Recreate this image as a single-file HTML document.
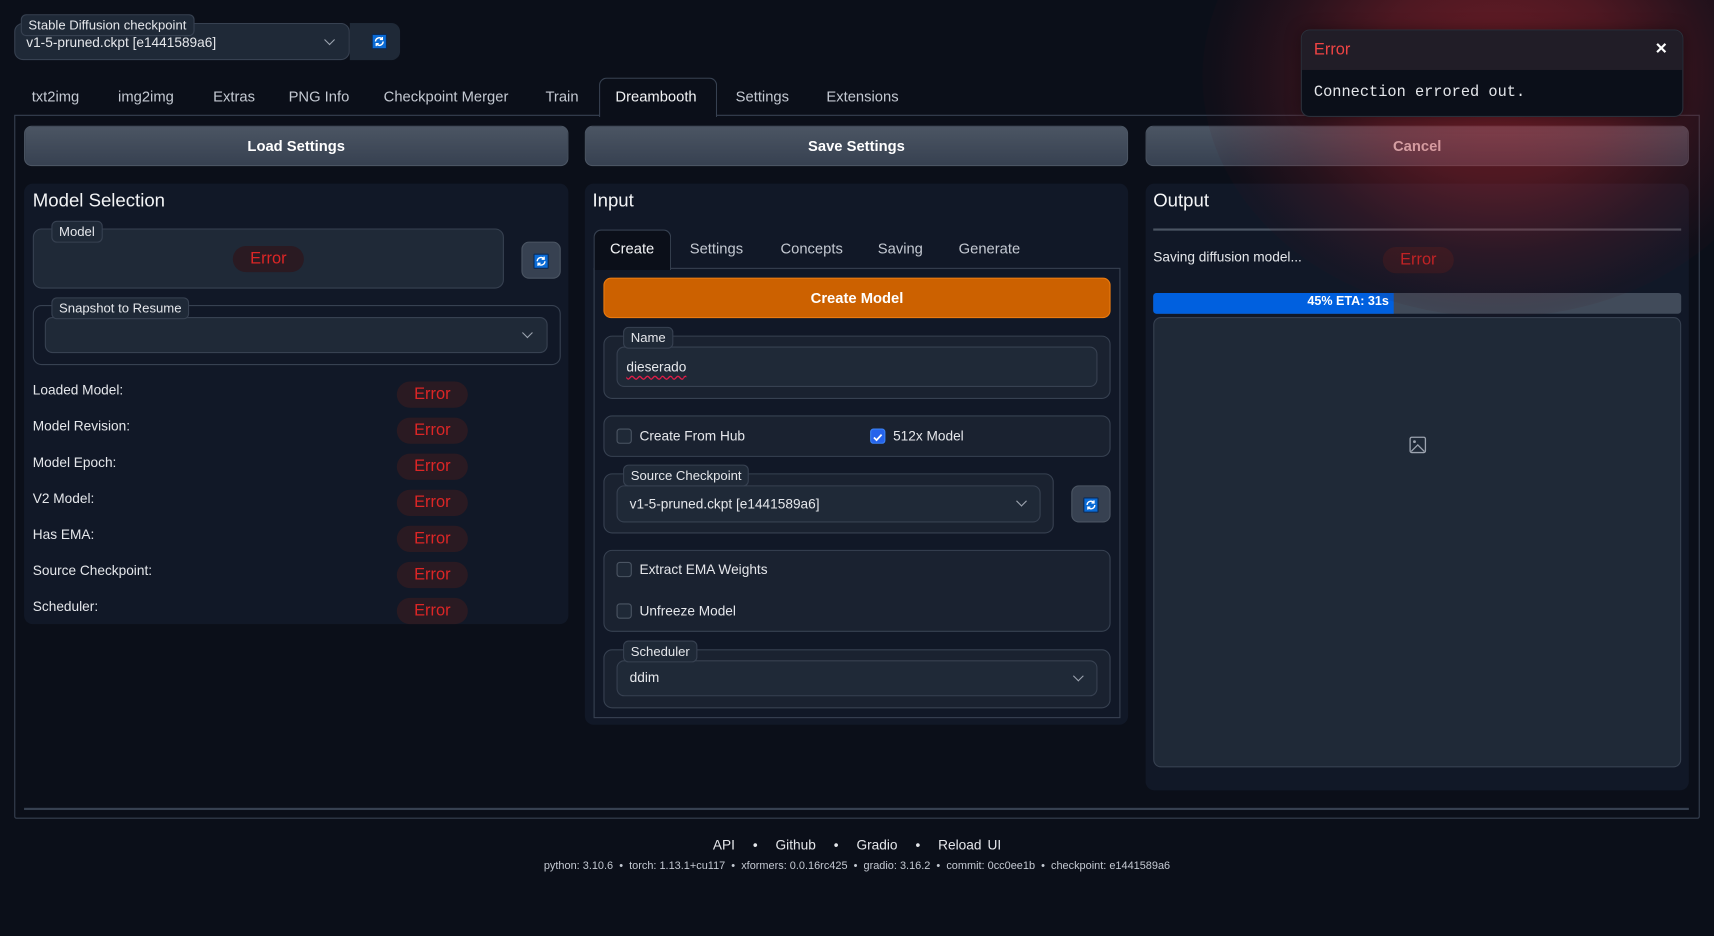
<!DOCTYPE html>
<html><head><meta charset="utf-8">
<style>
*{box-sizing:border-box;margin:0;padding:0}
html,body{width:1714px;height:936px;overflow:hidden;background:#0b0f19}
#w{position:absolute;left:0;top:0;width:1568px;height:856px;transform:scale(1.09311);transform-origin:0 0;font-family:"Liberation Sans",sans-serif;color:#e5e7eb;background:#0b0f19;overflow:hidden}
.a{position:absolute}
.glow{left:1100px;top:-150px;width:540px;height:440px;border-radius:50%;background:radial-gradient(ellipse at 50% 50%,rgba(190,40,50,.55) 0%,rgba(160,35,45,.45) 30%,rgba(110,25,35,.28) 52%,rgba(60,15,25,.12) 68%,rgba(11,15,25,0) 78%);pointer-events:none}
.blk{background:#111827;border-radius:8px}
.box{border:1px solid #374151;border-radius:8px;background:#1f2937}
.inp{border:1px solid #374151;border-radius:7px;background:#1f2937}
.chip{background:#1f2937;border:1px solid #374151;border-radius:5px;font-size:12px;padding:2px 6px;color:#e5e7eb}
.btn{background:linear-gradient(#4b5563,#374151);border:1px solid #4b5563;border-radius:7px;color:#fff;font-weight:bold;font-size:13.5px;text-align:center;line-height:36px}
.tab{font-size:13.5px;color:#c4c9d2}
.t{font-size:12.5px;color:#e5e7eb}
.err{background:#2a1a22;border-radius:13px;color:#dc2626;font-size:15px;text-align:center;width:65px;height:24px;line-height:24px}
.ref{width:14px;height:14px;background:#0a6bd6;border:1px solid #0c2a55;border-radius:1px}
.ref svg{display:block}
.rb{background:#374151;border:1px solid #4b5563;border-radius:7px}
.cb{width:14px;height:14px;border:1px solid #4b5563;border-radius:3px;background:#1f2937}
.chev{width:7px;height:7px;border-right:1.3px solid #9ca3af;border-bottom:1.3px solid #9ca3af;transform:rotate(45deg)}
h3{font-weight:normal;font-size:17px;color:#f3f4f6;position:absolute}
</style></head><body><div id="w">

<!-- checkpoint -->
<div class="a box" style="left:13px;top:21px;width:307px;height:34px;background:#1f2937"></div>
<div class="a chip" style="left:19px;top:13px">Stable Diffusion checkpoint</div>
<div class="a t" style="left:24px;top:32px">v1-5-pruned.ckpt [e1441589a6]</div>
<div class="a chev" style="left:298px;top:33px"></div>
<div class="a" style="left:320px;top:21px;width:46px;height:34px;background:#1f2937;border-radius:0 8px 8px 0"></div>
<div class="a ref" style="left:340px;top:31px"><svg width="12" height="12" viewBox="0 0 12 12"><path d="M2.5 6a3.5 3.5 0 0 1 6-2.4M9.5 6a3.5 3.5 0 0 1-6 2.4" stroke="#fff" stroke-width="1.3" fill="none"/><path d="M8.8 1.8v2.3H6.5M3.2 10.2V7.9h2.3" stroke="#fff" stroke-width="1.2" fill="none"/></svg></div>

<!-- tabs -->
<div class="a tab" style="left:29px;top:81px">txt2img</div>
<div class="a tab" style="left:108px;top:81px">img2img</div>
<div class="a tab" style="left:195px;top:81px">Extras</div>
<div class="a tab" style="left:264px;top:81px">PNG Info</div>
<div class="a tab" style="left:351px;top:81px">Checkpoint Merger</div>
<div class="a tab" style="left:499px;top:81px">Train</div>
<div class="a" style="left:13px;top:105px;width:1542px;height:644px;border:1.5px solid #374151;border-radius:0 0 2px 2px"></div>
<div class="a" style="left:548px;top:71px;width:108px;height:36px;border:1.5px solid #374151;border-bottom:none;border-radius:7px 7px 0 0;background:#0b0f19"></div>
<div class="a tab" style="left:563px;top:81px;color:#f3f4f6">Dreambooth</div>
<div class="a tab" style="left:673px;top:81px">Settings</div>
<div class="a tab" style="left:756px;top:81px">Extensions</div>

<!-- buttons -->
<div class="a btn" style="left:22px;top:115px;width:498px;height:37px">Load Settings</div>
<div class="a btn" style="left:535px;top:115px;width:497px;height:37px">Save Settings</div>
<div class="a btn" style="left:1048px;top:115px;width:497px;height:37px">Cancel</div>

<!-- Model selection -->
<div class="a blk" style="left:22px;top:168px;width:498px;height:403px"></div>
<h3 style="left:30px;top:174px">Model Selection</h3>
<div class="a box" style="left:30px;top:209px;width:431px;height:55px"></div>
<div class="a chip" style="left:47px;top:202px">Model</div>
<div class="a err" style="left:213px;top:225px">Error</div>
<div class="a rb" style="left:477px;top:221px;width:36px;height:34px"></div>
<div class="a ref" style="left:488px;top:232px"><svg width="12" height="12" viewBox="0 0 12 12"><path d="M2.5 6a3.5 3.5 0 0 1 6-2.4M9.5 6a3.5 3.5 0 0 1-6 2.4" stroke="#fff" stroke-width="1.3" fill="none"/><path d="M8.8 1.8v2.3H6.5M3.2 10.2V7.9h2.3" stroke="#fff" stroke-width="1.2" fill="none"/></svg></div>
<div class="a box" style="left:30px;top:279px;width:483px;height:55px;background:#111827"></div>
<div class="a inp" style="left:41px;top:290px;width:460px;height:33px"></div>
<div class="a chip" style="left:47px;top:272px">Snapshot to Resume</div>
<div class="a chev" style="left:479px;top:301px"></div>

<div class="a t" style="left:30px;top:350px">Loaded Model:</div><div class="a err" style="left:363px;top:349px">Error</div>
<div class="a t" style="left:30px;top:383px">Model Revision:</div><div class="a err" style="left:363px;top:382px">Error</div>
<div class="a t" style="left:30px;top:416px">Model Epoch:</div><div class="a err" style="left:363px;top:415px">Error</div>
<div class="a t" style="left:30px;top:449px">V2 Model:</div><div class="a err" style="left:363px;top:448px">Error</div>
<div class="a t" style="left:30px;top:482px">Has EMA:</div><div class="a err" style="left:363px;top:481px">Error</div>
<div class="a t" style="left:30px;top:515px">Source Checkpoint:</div><div class="a err" style="left:363px;top:514px">Error</div>
<div class="a t" style="left:30px;top:548px">Scheduler:</div><div class="a err" style="left:363px;top:547px">Error</div>

<!-- Input -->
<div class="a blk" style="left:535px;top:168px;width:497px;height:495px"></div>
<h3 style="left:542px;top:174px">Input</h3>
<div class="a" style="left:543px;top:245px;width:482px;height:412px;border:1.5px solid #374151"></div>
<div class="a" style="left:543px;top:210px;width:71px;height:37px;border:1.5px solid #374151;border-bottom:none;border-radius:7px 7px 0 0;background:#0b0f19"></div>
<div class="a tab" style="left:558px;top:220px;color:#f3f4f6">Create</div>
<div class="a tab" style="left:631px;top:220px">Settings</div>
<div class="a tab" style="left:714px;top:220px">Concepts</div>
<div class="a tab" style="left:803px;top:220px">Saving</div>
<div class="a tab" style="left:877px;top:220px">Generate</div>
<div class="a btn" style="left:552px;top:254px;width:464px;height:37px;background:#cc6100;border-color:#ea7a10">Create Model</div>

<div class="a box" style="left:552px;top:307px;width:464px;height:58px;background:#1a2230"></div>
<div class="a inp" style="left:564px;top:317px;width:440px;height:37px"></div>
<div class="a chip" style="left:570px;top:299px">Name</div>
<div class="a t" style="left:573px;top:329px;text-decoration:underline wavy #e11d48;text-underline-offset:3px">dieserado</div>

<div class="a box" style="left:552px;top:380px;width:464px;height:38px;background:#1a2230"></div>
<div class="a cb" style="left:564px;top:392px"></div>
<div class="a t" style="left:585px;top:392px">Create From Hub</div>
<div class="a cb" style="left:796px;top:392px;background:#2563eb;border-color:#3b82f6"><svg width="12" height="12" viewBox="0 0 12 12"><path d="M2.5 6.2l2.4 2.4 4.6-5" stroke="#fff" stroke-width="1.6" fill="none"/></svg></div>
<div class="a t" style="left:817px;top:392px">512x Model</div>

<div class="a box" style="left:552px;top:433px;width:412px;height:55px;background:#1a2230"></div>
<div class="a inp" style="left:564px;top:444px;width:388px;height:34px"></div>
<div class="a chip" style="left:570px;top:425px">Source Checkpoint</div>
<div class="a t" style="left:576px;top:454px">v1-5-pruned.ckpt [e1441589a6]</div>
<div class="a chev" style="left:931px;top:455px"></div>
<div class="a rb" style="left:980px;top:444px;width:36px;height:34px"></div>
<div class="a ref" style="left:991px;top:455px"><svg width="12" height="12" viewBox="0 0 12 12"><path d="M2.5 6a3.5 3.5 0 0 1 6-2.4M9.5 6a3.5 3.5 0 0 1-6 2.4" stroke="#fff" stroke-width="1.3" fill="none"/><path d="M8.8 1.8v2.3H6.5M3.2 10.2V7.9h2.3" stroke="#fff" stroke-width="1.2" fill="none"/></svg></div>

<div class="a box" style="left:552px;top:503px;width:464px;height:75px;background:#1a2230"></div>
<div class="a cb" style="left:564px;top:514px"></div>
<div class="a t" style="left:585px;top:514px">Extract EMA Weights</div>
<div class="a cb" style="left:564px;top:552px"></div>
<div class="a t" style="left:585px;top:552px">Unfreeze Model</div>

<div class="a box" style="left:552px;top:594px;width:464px;height:54px;background:#1a2230"></div>
<div class="a inp" style="left:564px;top:604px;width:440px;height:33px"></div>
<div class="a chip" style="left:570px;top:586px">Scheduler</div>
<div class="a t" style="left:576px;top:613px">ddim</div>
<div class="a chev" style="left:983px;top:615px"></div>

<!-- Output -->
<div class="a blk" style="left:1048px;top:168px;width:497px;height:555px"></div>
<h3 style="left:1055px;top:174px">Output</h3>
<div class="a" style="left:1055px;top:209px;width:483px;height:1.5px;background:#4b5563"></div>
<div class="a t" style="left:1055px;top:228px">Saving diffusion model...</div>
<div class="a err" style="left:1265px;top:226px">Error</div>
<div class="a" style="left:1055px;top:268px;width:483px;height:19px;background:#414b5a;border-radius:3px"></div>
<div class="a" style="left:1055px;top:268px;width:220px;height:19px;background:#0060df;border-radius:3px 0 0 3px"></div>
<div class="a" style="left:1196px;top:270px;font-size:11.5px;font-weight:bold;color:#fff">45% ETA: 31s</div>
<div class="a" style="left:1055px;top:290px;width:483px;height:412px;background:#1f2937;border:1px solid #374151;border-radius:7px"></div>
<svg class="a" style="left:1289px;top:399px" width="16" height="16" viewBox="0 0 16 16"><rect x="1" y="1" width="14" height="14" rx="1.5" stroke="#9ca3af" stroke-width="1.2" fill="none"/><circle cx="5" cy="5" r="1.3" fill="#9ca3af"/><path d="M2 14l6-6 6 6" stroke="#9ca3af" stroke-width="1.2" fill="none"/></svg>

<div class="a glow"></div>

<!-- footer -->
<div class="a" style="left:22px;top:739px;width:1523px;height:1.5px;background:#374151"></div>
<div class="a" style="left:0;top:766px;width:1568px;text-align:center;font-size:12.5px;color:#e5e7eb;word-spacing:2px">API &nbsp;&nbsp;•&nbsp;&nbsp; Github &nbsp;&nbsp;•&nbsp;&nbsp; Gradio &nbsp;&nbsp;•&nbsp;&nbsp; Reload UI</div>
<div class="a" style="left:0;top:787px;width:1568px;text-align:center;font-size:10px;color:#c4c9d2">python: 3.10.6 &nbsp;•&nbsp; torch: 1.13.1+cu117 &nbsp;•&nbsp; xformers: 0.0.16rc425 &nbsp;•&nbsp; gradio: 3.16.2 &nbsp;•&nbsp; commit: 0cc0ee1b &nbsp;•&nbsp; checkpoint: e1441589a6</div>

<!-- toast -->
<div class="a" style="left:1190px;top:27px;width:350px;height:80px;border-radius:8px;background:#0b0f19;border:1px solid #2b2f3a;overflow:hidden;box-shadow:0 0 14px rgba(0,0,0,.4)">
 <div style="height:36px;background:#211d27;position:relative">
  <div class="a" style="left:11px;top:9px;font-size:15px;color:#ef4444">Error</div>
  <div class="a" style="right:14px;top:6px;font-size:18px;font-weight:bold;color:#fff">×</div>
 </div>
 <div class="a" style="left:11px;top:49px;font-family:'Liberation Mono',monospace;font-size:14px;color:#e5e7eb">Connection errored out.</div>
</div>

</div></body></html>
